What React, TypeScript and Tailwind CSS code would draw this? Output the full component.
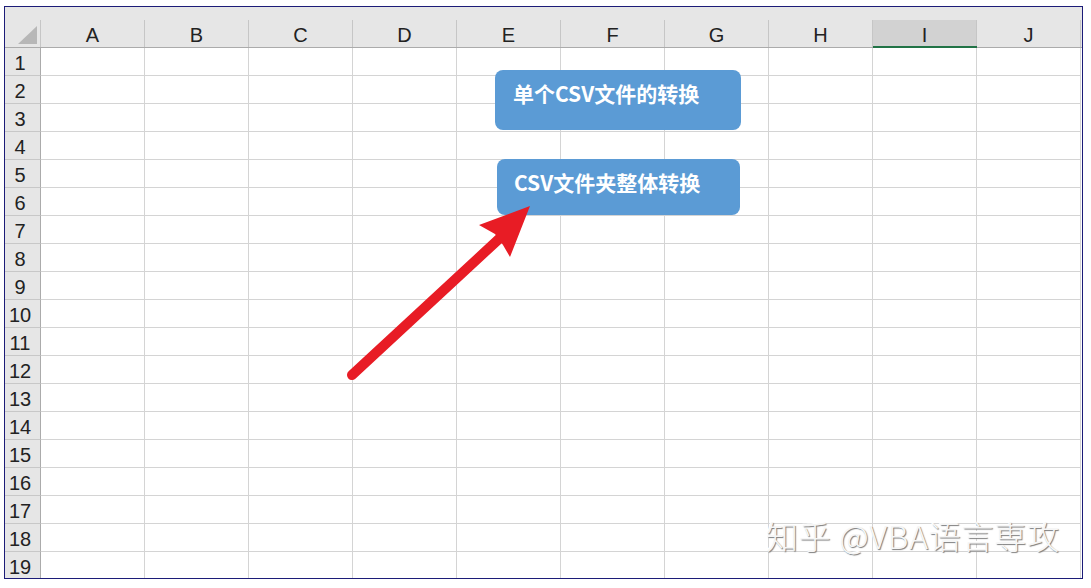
import React from "react";

const COLS = ["A", "B", "C", "D", "E", "F", "G", "H", "I", "J"];
const ROWS = Array.from({ length: 19 }, (_, i) => i + 1);
const SELECTED = "I";

function ColumnHeader({ label }: { label: string }) {
  const active = label === SELECTED;
  return (
    <div
      className={
        active
          ? "w-[104px] shrink-0 h-full pt-[13px] border-b-2 border-[#217346]"
          : "w-[104px] shrink-0 h-full pt-[13px] border-b border-[#ababab]"
      }
    >
      <div
        className={
          active
            ? "h-full border-r border-l border-[#c6c6c6] bg-[#d2d2d2] -ml-px text-center pt-[3px] leading-[24px]"
            : "h-full border-r border-[#c6c6c6] text-center pt-[3px] leading-[24px]"
        }
      >
        {label}
      </div>
    </div>
  );
}

function SheetGrid() {
  return (
    <div className="ml-[4px] mt-[6px] w-[1079px] h-[573px] border border-[#1c1c78] overflow-hidden bg-white font-['Liberation_Sans',Arial,sans-serif] text-[20px] text-[#222]">
      {/* column headers */}
      <div className="flex h-[41px] bg-[#e6e6e6]">
        <div className="w-[36px] shrink-0 h-full pt-[13px] border-b border-[#ababab]">
          <div className="relative h-full border-r border-[#c6c6c6]">
            <div className="absolute right-[3px] bottom-[3px] w-[19px] h-[18px] bg-[#b7b7b7] [clip-path:polygon(100%_0,100%_100%,0_100%)]" />
          </div>
        </div>
        {COLS.map((c) => (
          <ColumnHeader key={c} label={c} />
        ))}
        <div className="flex-1 h-full border-b border-[#ababab]" />
      </div>

      {/* rows */}
      {ROWS.map((r) => (
        <div key={r} className="flex h-[28px] shrink-0">
          <div className="w-[36px] shrink-0 bg-[#e6e6e6] border-r border-b border-r-[#ababab] border-b-[#c8c8c8] pr-[5px] text-center pt-[3px] leading-[24px]">
            {r}
          </div>
          {COLS.map((c) => (
            <div key={c} className="w-[104px] shrink-0 border-r border-b border-[#d4d4d4]" />
          ))}
        </div>
      ))}
    </div>
  );
}

function Arrow() {
  return (
    <svg
      className="absolute left-0 top-0 pointer-events-none"
      width={1091}
      height={588}
      viewBox="0 0 1091 588"
    >
      <line
        x1={352}
        y1={375}
        x2={500}
        y2={238}
        stroke="#e81c25"
        strokeWidth={10}
        strokeLinecap="round"
      />
      <polygon
        points="530,206 479,225 495,234 503,245 510,257"
        fill="#e81c25"
      />
    </svg>
  );
}

export default function App() {
  return (
    <div className="relative w-[1091px] h-[588px] bg-white overflow-hidden">
      <SheetGrid />

      {/* shape buttons placed on the sheet */}
      <div className="absolute left-[495px] top-[70px] w-[246px] h-[60px] rounded-[8px] bg-[#5b9bd5] pl-[18px] pt-[9px] text-white font-bold text-[21px] leading-[29px] font-['Noto_Sans_CJK_SC',sans-serif]">
        单个CSV文件的转换
      </div>
      <div className="absolute left-[497px] top-[159px] w-[243px] h-[56px] rounded-[8px] bg-[#5b9bd5] pl-[17px] pt-[9px] text-white font-bold text-[21px] leading-[29px] font-['Noto_Sans_CJK_SC',sans-serif]">
        CSV文件夹整体转换
      </div>

      <Arrow />

      {/* watermark */}
      <div className="absolute left-[766px] top-[519px] text-[32px] leading-[32px] tracking-[0.8px] font-light text-[#f6f6f6] whitespace-nowrap font-['Noto_Sans_CJK_SC',sans-serif] [text-shadow:1px_1px_1px_#7a7a7a,-1px_-1px_0_#ffffff]">
        知乎 @VBA语言専攻
      </div>
    </div>
  );
}
